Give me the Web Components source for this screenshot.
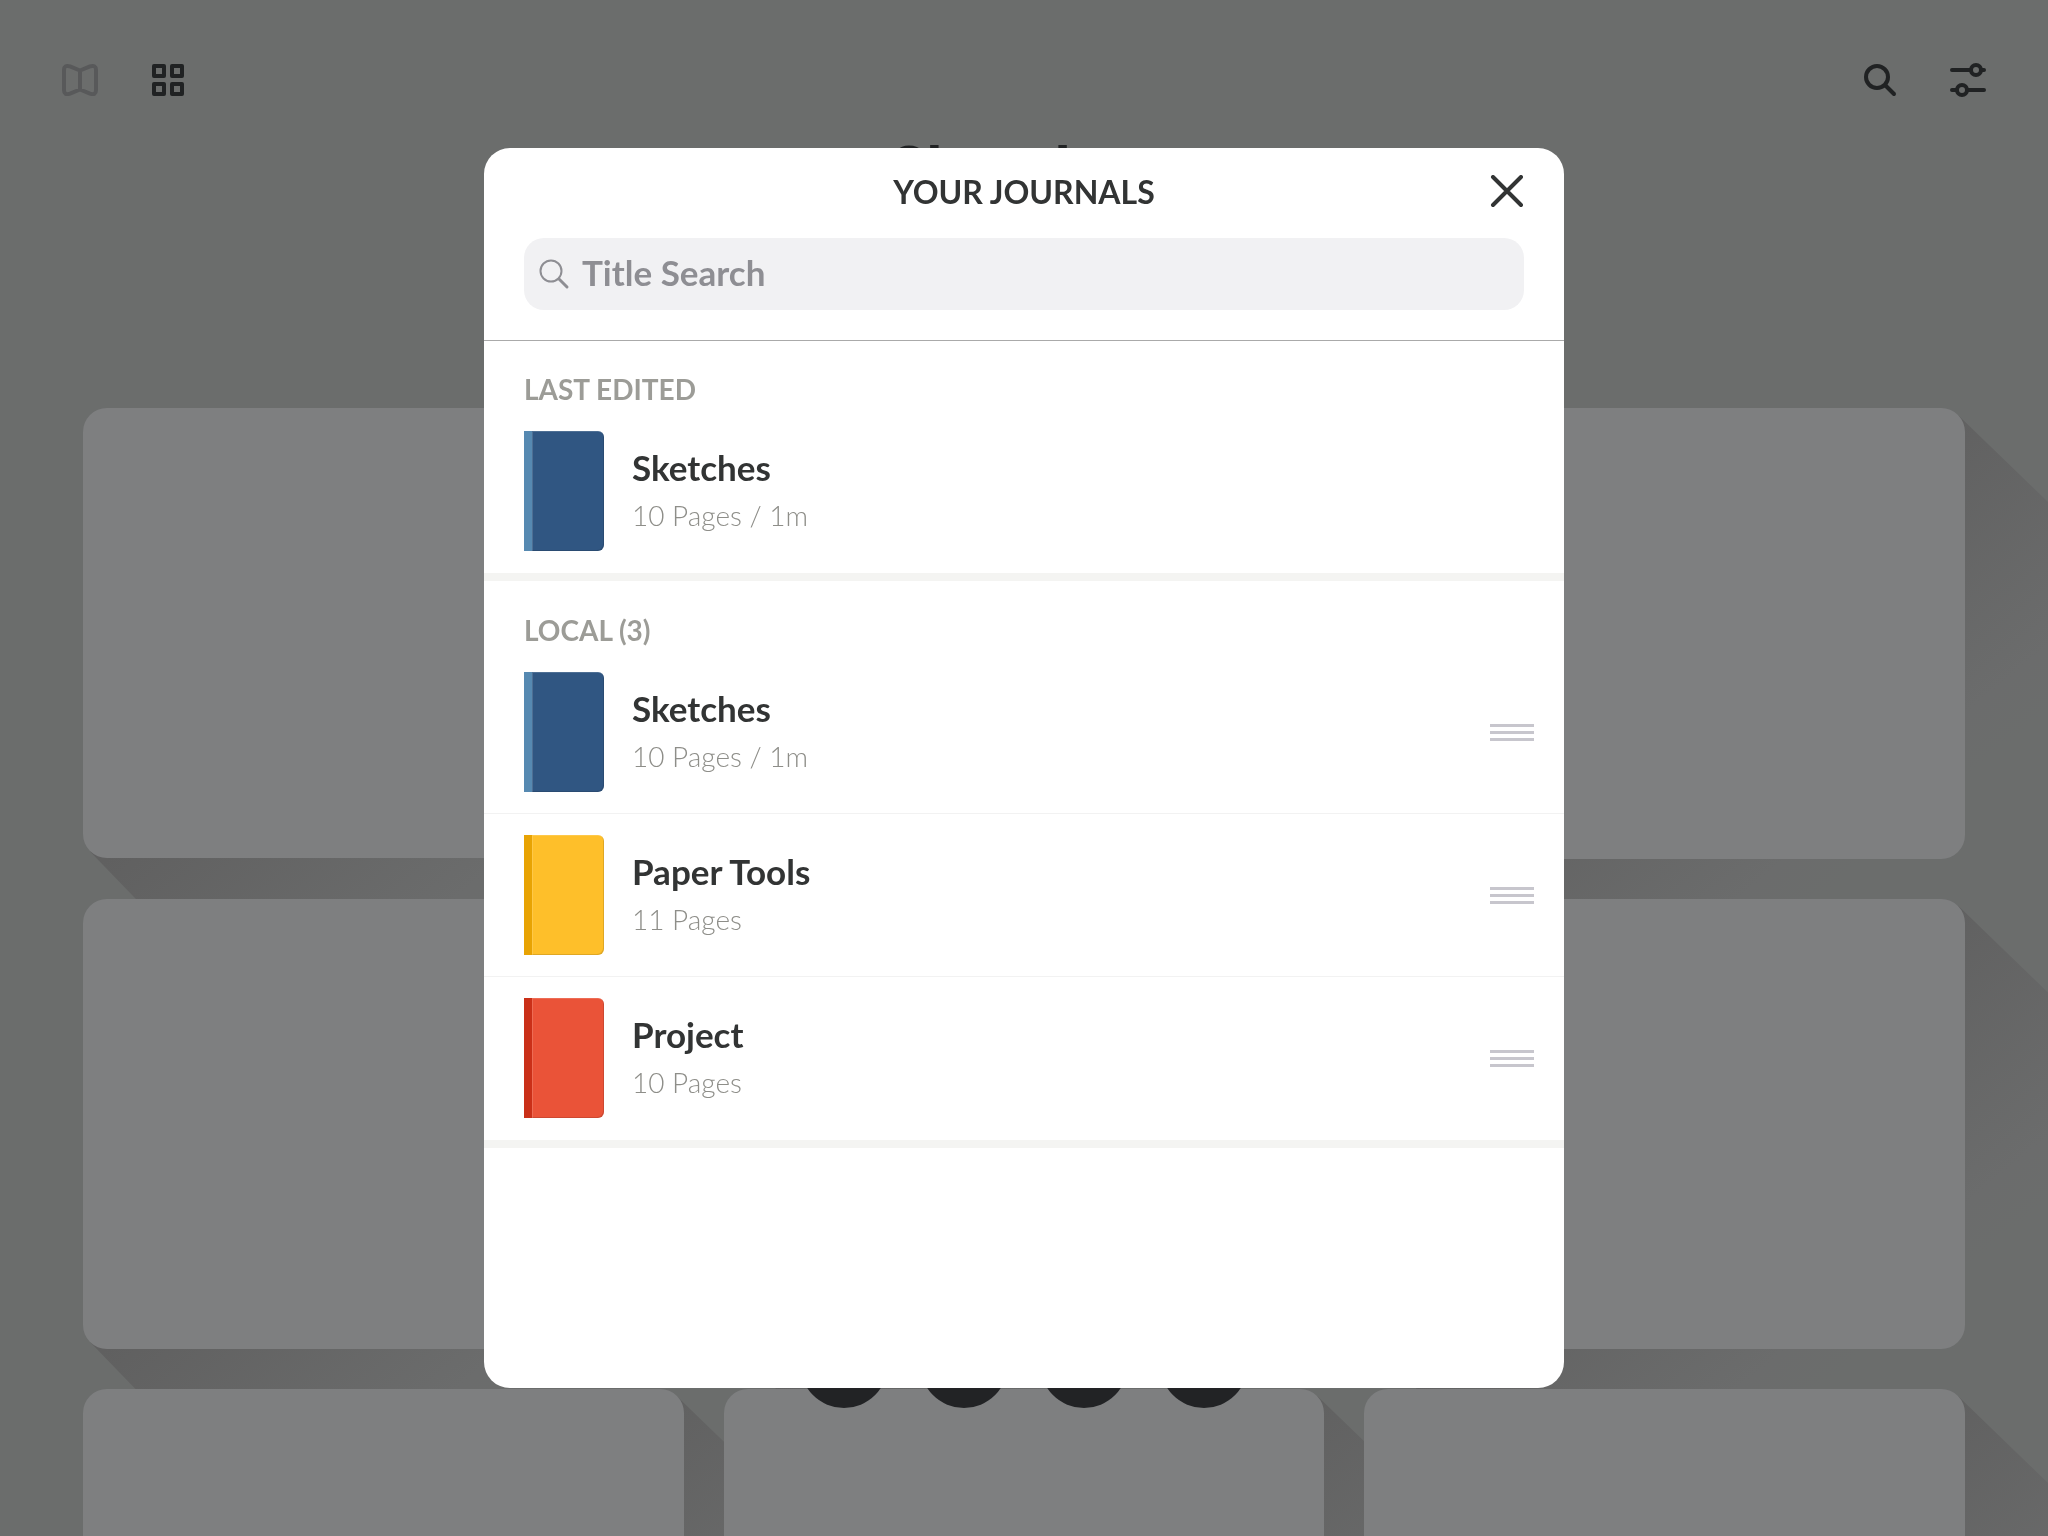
<!DOCTYPE html>
<html lang="en">
<head>
  <meta charset="UTF-8">
  <meta name="viewport" content="width=device-width, initial-scale=1.0">
  <title>Journals</title>
  <style>
    body {
      margin: 0;
      background: #6b6d6c;
      color: #323434;
      font-family: Lato, "Open Sans", sans-serif;
    }
  </style>
</head>
<body>
  <journal-page name="Sketches"></journal-page>

  <journal-dialog heading="Your Journals">
    <journal-section heading="Last Edited">
      <journal-item name="Sketches" info="10 Pages / 1m" cover="#305682" spine="#5689b1"></journal-item>
    </journal-section>
    <journal-section heading="Local (3)">
      <journal-item name="Sketches" info="10 Pages / 1m" cover="#305682" spine="#5689b1" sortable></journal-item>
      <journal-item name="Paper Tools" info="11 Pages" cover="#febf2a" spine="#e8a303" sortable></journal-item>
      <journal-item name="Project" info="10 Pages" cover="#ea5338" spine="#ca3018" sortable></journal-item>
    </journal-section>
  </journal-dialog>

  <script>
    const reset = /* css */ `
      * {
        margin: 0;
        padding: 0;
        box-sizing: border-box;
      }

      button {
        border: none;
        background: none;
        color: inherit;
        font: inherit;
        cursor: pointer;
      }

      svg {
        display: block;
        fill: none;
        stroke: currentColor;
        stroke-linecap: round;
        stroke-linejoin: round;
      }
    `;

    // Top bar with the view switches and the tools
    class JournalToolbar extends HTMLElement {
      constructor() {
        super();
        this.attachShadow({ mode: "open" });
      }

      static get styles() {
        return /* css */ `
          ${reset}

          :host {
            display: block;
            color: #202223;
          }

          nav {
            display: flex;
            gap: 52px;
            padding: 62px 62px 26px;
          }

          .inactive {
            color: #58595a;
          }

          .search {
            margin-left: auto;
          }
        `;
      }

      connectedCallback() {
        this.shadowRoot.innerHTML = /* html */ `
          <style>${JournalToolbar.styles}</style>
          <nav>
            <button class="inactive" aria-label="Book view">
              <svg width="36" height="36" stroke-width="4">
                <path d="M18 8.5 L8 4.4 Q2 2.6 2 8 V28 Q2 33.6 8 31.6 L18 27.5 L28 31.6 Q34 33.6 34 28 V8 Q34 2.6 28 4.4 Z M18 8.5 V27.5"/>
              </svg>
            </button>
            <button aria-label="Grid view">
              <svg width="36" height="36" stroke-width="4">
                <path d="M4 4h10v10h-10z M22 4h10v10h-10z M4 22h10v10h-10z M22 22h10v10h-10z"/>
              </svg>
            </button>
            <button class="search" aria-label="Search">
              <svg width="36" height="36" stroke-width="4">
                <circle cx="15" cy="15" r="11"/>
                <path d="M23.5 23.5 L32 32"/>
              </svg>
            </button>
            <button aria-label="Options">
              <svg width="36" height="36" stroke-width="4">
                <path d="M2 8h19 M31 8h3 M2 28h5 M17 28h17"/>
                <circle cx="26" cy="8" r="5"/>
                <circle cx="12" cy="28" r="5"/>
              </svg>
            </button>
          </nav>
        `;
      }
    }

    // Blank sheet with a long shadow falling to the bottom right
    class PageCard extends HTMLElement {
      constructor() {
        super();
        this.attachShadow({ mode: "open" });
      }

      static get styles() {
        return /* css */ `
          :host {
            display: block;
            position: relative;
            aspect-ratio: 4 / 3;
            border-radius: 24px;
            background: #7e7f80;
          }

          :host::before {
            content: "";
            position: absolute;
            z-index: -1;
            inset: 0 -200px -200px 0;
            background: linear-gradient(to bottom right, #606060 36%, #6b6c6c 61%, transparent 66%);
            clip-path: polygon(
              calc(100% - 207px) 7px,
              100% 207px,
              100% 100%,
              207px 100%,
              7px calc(100% - 207px)
            );
          }
        `;
      }

      connectedCallback() {
        this.shadowRoot.innerHTML = `<style>${PageCard.styles}</style>`;
      }
    }

    // Journal that lies open under the dialog
    class JournalPage extends HTMLElement {
      constructor() {
        super();
        this.attachShadow({ mode: "open" });
      }

      static get styles() {
        return /* css */ `
          ${reset}

          :host {
            display: block;
            height: 100vh;
            overflow: hidden;
          }

          h1 {
            height: 284px;
            color: #202223;
            font-size: 68px;
            line-height: 92px;
            text-align: center;
          }

          .pages {
            display: grid;
            grid-template-columns: repeat(3, 1fr);
            gap: 40px;
            padding: 0 83px;
            isolation: isolate;
          }

          .actions {
            position: fixed;
            right: 0;
            bottom: 128px;
            left: 0;
            display: flex;
            justify-content: center;
            gap: 32px;
          }

          .actions button {
            width: 88px;
            height: 88px;
            border-radius: 50%;
            background: #222325;
          }
        `;
      }

      connectedCallback() {
        const actions = ["Share", "Add page", "Duplicate", "Delete"];

        this.shadowRoot.innerHTML = /* html */ `
          <style>${JournalPage.styles}</style>
          <journal-toolbar></journal-toolbar>
          <h1>${this.getAttribute("name")}</h1>
          <div class="pages">${"<page-card></page-card>".repeat(9)}</div>
          <div class="actions">
            ${actions.map((action) => `<button aria-label="${action}"></button>`).join("")}
          </div>
        `;
      }
    }

    class JournalDialog extends HTMLElement {
      constructor() {
        super();
        this.attachShadow({ mode: "open" });
      }

      static get styles() {
        return /* css */ `
          ${reset}

          :host {
            position: fixed;
            inset: 0;
            display: flex;
            justify-content: center;
            padding: 148px 40px;
          }

          .dialog {
            display: flex;
            flex-direction: column;
            width: 100%;
            max-width: 1080px;
            border-radius: 26px;
            background: #fff;
            overflow: hidden;
          }

          header {
            padding: 0 40px 30px;
            box-shadow: 0 1px #aaaaaa;
          }

          .bar {
            display: grid;
            grid-template-columns: 1fr auto 1fr;
            align-items: center;
            height: 88px;
            margin-bottom: 2px;
          }

          h2 {
            grid-column: 2;
            font-size: 32px;
            line-height: 40px;
            text-transform: uppercase;
          }

          .bar button {
            justify-self: end;
          }

          .search {
            display: flex;
            align-items: center;
            gap: 12px;
            height: 72px;
            padding: 0 14px;
            border-radius: 20px;
            background: #f1f1f3;
            color: #8e8e93;
          }

          input {
            flex: 1;
            min-width: 0;
            padding-bottom: 4px;
            border: none;
            outline: none;
            background: none;
            color: #323434;
            font: 700 35px/44px Lato, "Open Sans", sans-serif;
          }

          input::placeholder {
            color: #8e8e93;
            opacity: 1;
          }

          .list {
            flex: 1;
            min-height: 0;
            overflow: hidden;
          }
        `;
      }

      connectedCallback() {
        this.shadowRoot.innerHTML = /* html */ `
          <style>${JournalDialog.styles}</style>
          <div class="dialog" role="dialog" aria-labelledby="heading">
            <header>
              <div class="bar">
                <h2 id="heading">${this.getAttribute("heading")}</h2>
                <button aria-label="Close">
                  <svg width="34" height="34" stroke-width="4">
                    <path d="M3 2 L31 30 M31 2 L3 30"/>
                  </svg>
                </button>
              </div>
              <label class="search">
                <svg width="32" height="32" stroke-width="2" aria-hidden="true">
                  <circle cx="13" cy="13" r="10.5"/>
                  <path d="M21 21 L29 29" stroke-width="3"/>
                </svg>
                <input type="text" placeholder="Title Search" aria-label="Title Search">
              </label>
            </header>
            <div class="list"><slot></slot></div>
          </div>
        `;
      }
    }

    class JournalSection extends HTMLElement {
      constructor() {
        super();
        this.attachShadow({ mode: "open" });
      }

      static get styles() {
        return /* css */ `
          ${reset}

          :host {
            display: block;
            border-bottom: 8px solid #f4f4f2;
          }

          h3 {
            height: 70px;
            padding: 32px 40px 0;
            color: #9c9c97;
            font-size: 28px;
            line-height: 34px;
            text-transform: uppercase;
          }

          ::slotted(journal-item:last-child) {
            border-bottom-color: transparent !important;
          }
        `;
      }

      connectedCallback() {
        this.shadowRoot.innerHTML = /* html */ `
          <style>${JournalSection.styles}</style>
          <h3>${this.getAttribute("heading")}</h3>
          <slot></slot>
        `;
      }
    }

    class JournalItem extends HTMLElement {
      constructor() {
        super();
        this.attachShadow({ mode: "open" });
      }

      static get styles() {
        return /* css */ `
          ${reset}

          :host {
            display: flex;
            align-items: center;
            gap: 28px;
            padding: 21px 30px 21px 40px;
            border-bottom: 1px solid #f2f2f2;
          }

          .cover {
            width: 80px;
            height: 120px;
            border-left: 8px solid var(--spine);
            border-radius: 0 6px 6px 0;
            background: var(--cover);
            box-shadow:
              inset 1px 1px rgb(255 255 255 / 15%),
              inset -1px -1px rgb(0 0 0 / 12%);
          }

          .text {
            flex: 1;
          }

          h4 {
            font-size: 35px;
            line-height: 44px;
          }

          p {
            margin-top: 4px;
            color: #8e8e89;
            font-size: 28px;
            font-weight: 300;
            line-height: 44px;
          }

          .handle {
            color: #c7c6cd;
            cursor: grab;
          }
        `;
      }

      connectedCallback() {
        const handle = /* html */ `
          <button class="handle" aria-label="Reorder">
            <svg width="44" height="17">
              <path d="M0 1.5h44 M0 8.5h44 M0 15.5h44" stroke-width="3" stroke-linecap="butt"/>
            </svg>
          </button>
        `;

        this.style.setProperty("--cover", this.getAttribute("cover"));
        this.style.setProperty("--spine", this.getAttribute("spine"));

        this.shadowRoot.innerHTML = /* html */ `
          <style>${JournalItem.styles}</style>
          <div class="cover"></div>
          <div class="text">
            <h4>${this.getAttribute("name")}</h4>
            <p>${this.getAttribute("info")}</p>
          </div>
          ${this.hasAttribute("sortable") ? handle : ""}
        `;
      }
    }

    customElements.define("journal-toolbar", JournalToolbar);
    customElements.define("page-card", PageCard);
    customElements.define("journal-page", JournalPage);
    customElements.define("journal-dialog", JournalDialog);
    customElements.define("journal-section", JournalSection);
    customElements.define("journal-item", JournalItem);
  </script>
</body>
</html>
